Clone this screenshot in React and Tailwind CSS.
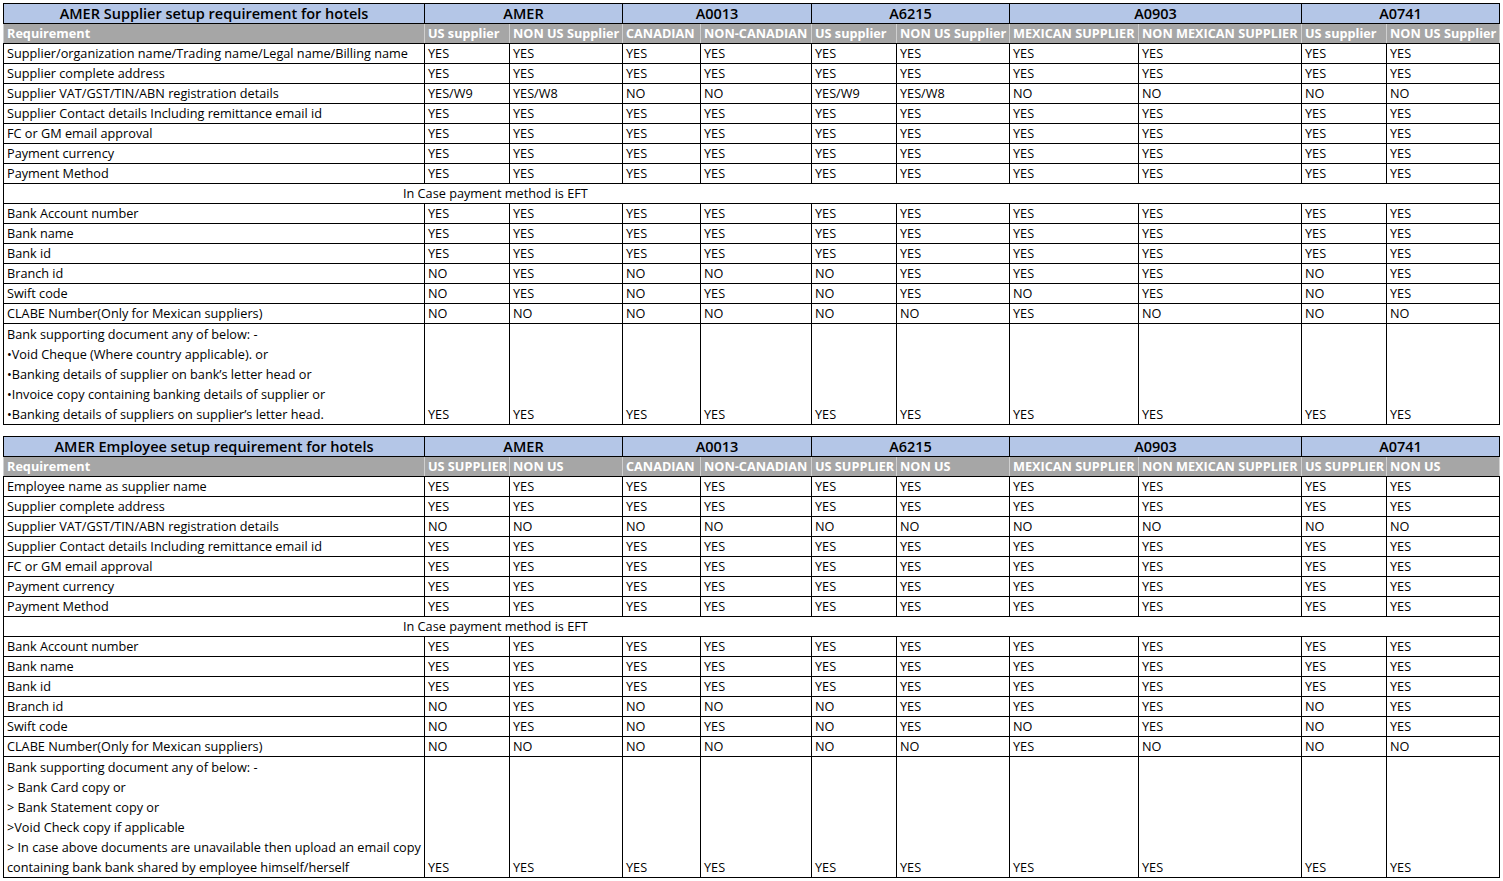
const W=[421,85,113,78,111,85,113,129,163,85,113];
const groups=[["AMER",2],["A0013",2],["A6215",2],["A0903",2],["A0741",2]];
const Y="YES",N="NO";
function Table({title,subs,rows1,rows2,last,lastVals}){
  const td="border border-black px-[3px] h-[20px] leading-[19px] whitespace-nowrap overflow-hidden";
  return(
  <table className="table-fixed border-collapse text-[12.7px] text-black" style={{width:1496}}>
    <colgroup>{W.map((w,i)=><col key={i} style={{width:w}}/>)}</colgroup>
    <tbody>
      <tr className="bg-[#b4c6e7] font-semibold text-[14.5px]">
        <td className={td+" text-center"}>{title}</td>
        {groups.map(([g,s])=><td key={g} colSpan={s} className={td+" text-center"}>{g}</td>)}
      </tr>
      <tr className="bg-[#a6a6a6] font-bold text-white">
        {["Requirement",...subs].map((s,i)=><td key={i} className={td+" border-x-[#d0d0d0]"}>{s}</td>)}
      </tr>
      {rows1.map(([l,...v],i)=><tr key={i}><td className={td}>{l}</td>{v.map((x,j)=><td key={j} className={td}>{x}</td>)}</tr>)}
      <tr><td colSpan={11} className={td+" pl-[399px]"}>In Case payment method is EFT</td></tr>
      {rows2.map(([l,...v],i)=><tr key={i}><td className={td}>{l}</td>{v.map((x,j)=><td key={j} className={td}>{x}</td>)}</tr>)}
      <tr>
        <td className="border border-black px-[3px] leading-[20px] whitespace-nowrap align-top">{last.map((t,i)=><div key={i}>{t}</div>)}</td>
        {lastVals.map((x,j)=><td key={j} className="border border-black px-[3px] leading-[19px] align-bottom">{x}</td>)}
      </tr>
    </tbody>
  </table>);
}
const all=v=>Array(10).fill(v);
const common2=[
  ["Bank Account number",...all(Y)],["Bank name",...all(Y)],["Bank id",...all(Y)],
  ["Branch id",N,Y,N,N,N,Y,Y,Y,N,Y],["Swift code",N,Y,N,Y,N,Y,N,Y,N,Y],
  ["CLABE Number(Only for Mexican suppliers)",N,N,N,N,N,N,Y,N,N,N]];
export default function App(){
  return(
  <div className="bg-white p-[3px] w-[1503px] h-[881px]" style={{fontFamily:"'Open Sans','Noto Sans',sans-serif"}}>
    <Table title="AMER Supplier setup requirement for hotels"
      subs={["US supplier","NON US Supplier","CANADIAN","NON-CANADIAN","US supplier","NON US Supplier","MEXICAN SUPPLIER","NON MEXICAN SUPPLIER","US supplier","NON US Supplier"]}
      rows1={[["Supplier/organization name/Trading name/Legal name/Billing name",...all(Y)],["Supplier complete address",...all(Y)],
        ["Supplier VAT/GST/TIN/ABN registration details","YES/W9","YES/W8",N,N,"YES/W9","YES/W8",N,N,N,N],
        ["Supplier Contact details Including remittance email id",...all(Y)],["FC or GM email approval",...all(Y)],["Payment currency",...all(Y)],["Payment Method",...all(Y)]]}
      rows2={common2}
      last={["Bank supporting document any of below: -","•Void Cheque (Where country applicable). or","•Banking details of supplier on bank’s letter head or","•Invoice copy containing banking details of supplier or","•Banking details of suppliers on supplier’s letter head."]}
      lastVals={all(Y)}/>
    <div className="h-[11px]"/>
    <Table title="AMER Employee setup requirement for hotels"
      subs={["US SUPPLIER","NON US","CANADIAN","NON-CANADIAN","US SUPPLIER","NON US","MEXICAN SUPPLIER","NON MEXICAN SUPPLIER","US SUPPLIER","NON US"]}
      rows1={[["Employee name as supplier name",...all(Y)],["Supplier complete address",...all(Y)],
        ["Supplier VAT/GST/TIN/ABN registration details",...all(N)],
        ["Supplier Contact details Including remittance email id",...all(Y)],["FC or GM email approval",...all(Y)],["Payment currency",...all(Y)],["Payment Method",...all(Y)]]}
      rows2={common2}
      last={["Bank supporting document any of below: -","> Bank Card copy or","> Bank Statement copy or",">Void Check copy if applicable","> In case above documents are unavailable then upload an email copy","containing bank bank shared by employee himself/herself"]}
      lastVals={all(Y)}/>
  </div>);
}
